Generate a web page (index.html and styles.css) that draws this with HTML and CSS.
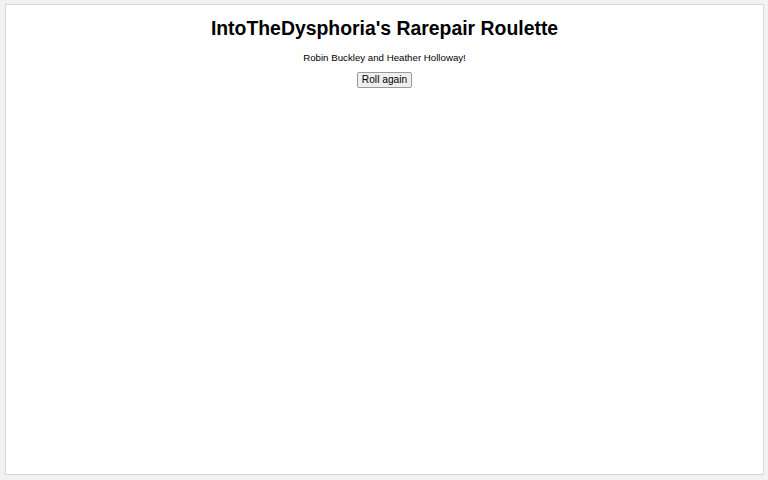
FILE: index.html
```html
<!DOCTYPE html>
<html>
<head>
<meta charset="utf-8">
<link rel="stylesheet" href="styles.css">
</head>
<body>
<div class="card">
  <h1 class="title">IntoTheDysphoria's Rarepair Roulette</h1>
  <p class="pair">Robin Buckley and Heather Holloway!</p>
  <button class="roll">Roll again</button>
</div>
</body>
</html>
```
FILE: styles.css
```css
html, body { margin: 0; padding: 0; }
body {
  background: #f2f2f2;
  font-family: "Liberation Sans", Arial, sans-serif;
  padding: 4px 4px 4px 5px;
  box-sizing: border-box;
  height: 480px;
}
.card {
  background: #fff;
  border: 1px solid #d8d8d8;
  height: 471px;
  box-sizing: border-box;
  text-align: center;
  padding-top: 12px;
}
.title {
  margin: 0;
  font-size: 19.4px;
  font-weight: bold;
  color: #000;
  line-height: 23px;
}
.pair {
  margin: 11px 0 0;
  font-size: 9.7px;
  line-height: 14px;
  color: #000;
}
.roll {
  margin-top: 7px;
  font-family: "Liberation Sans", Arial, sans-serif;
  font-size: 10.2px;
  padding: 1px 4px;
  height: 16px;
  line-height: 12px;
  background: #efefef;
  border: 1px solid #9a9a9a;
  border-radius: 2px;
  color: #000;
}
```
